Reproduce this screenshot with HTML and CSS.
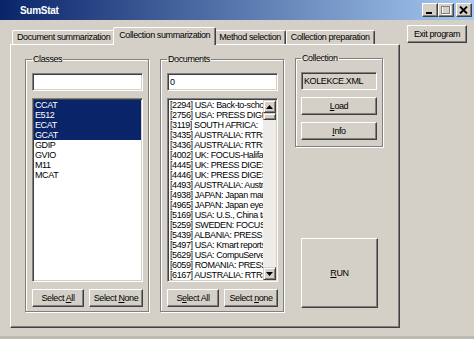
FILE: index.html
```html
<!DOCTYPE html>
<html lang="en">
<head>
    <meta charset="UTF-8">
    <title>SumStat</title>
    <link rel="stylesheet" href="styles.css">
</head>
<body>
    <div class="window">
        <div class="titlebar">
            <span class="title">SumStat</span>
            <div class="caption-btns">
                <span class="cbtn">
                    <svg width="10" height="9" viewBox="0 0 10 9"><rect x="1" y="6" width="6" height="2" fill="#000"/></svg>
                </span>
                <span class="cbtn">
                    <svg width="10" height="9" viewBox="0 0 10 9">
                        <rect x="1.5" y="0.5" width="8" height="8" fill="none" stroke="#fff"/>
                        <rect x="0.5" y="-0.5" width="8" height="8" fill="none" stroke="#808080"/>
                        <rect x="0" y="0" width="9" height="1" fill="#808080"/>
                    </svg>
                </span>
                <span class="cbtn close">
                    <svg width="10" height="9" viewBox="0 0 10 9"><path d="M1 0.5 L8 7.5 M8 0.5 L1 7.5" stroke="#000" stroke-width="1.8"/></svg>
                </span>
            </div>
        </div>

        <div class="client">
            <div class="tabctl">
                <div class="tabs">
                    <div class="tab">Document summarization</div>
                    <div class="tab active">Collection summarization</div>
                    <div class="tab">Method selection</div>
                    <div class="tab">Collection preparation</div>
                </div>

                <div class="panel">
                    <fieldset class="group list-group">
                        <legend>Classes</legend>
                        <div class="group-body">
                            <input type="text" class="field" value="">
                            <div class="listbox">
                                <div class="row sel">CCAT</div>
                                <div class="row sel">E512</div>
                                <div class="row sel">ECAT</div>
                                <div class="row sel">GCAT</div>
                                <div class="row">GDIP</div>
                                <div class="row">GVIO</div>
                                <div class="row">M11</div>
                                <div class="row">MCAT</div>
                            </div>
                            <div class="btn-row">
                                <button class="btn sel-all">Select <u>A</u>ll</button>
                                <button class="btn sel-none">Select <u>N</u>one</button>
                            </div>
                        </div>
                    </fieldset>

                    <fieldset class="group list-group">
                        <legend>Documents</legend>
                        <div class="group-body">
                            <input type="text" class="field" value="0">
                            <div class="listbox docs">
                                <div class="items">
                                    <div class="row">[2294] USA: Back-to-school sales</div>
                                    <div class="row">[2756] USA: PRESS DIGEST</div>
                                    <div class="row">[3119] SOUTH AFRICA: </div>
                                    <div class="row">[3435] AUSTRALIA: RTRS</div>
                                    <div class="row">[3436] AUSTRALIA: RTRS</div>
                                    <div class="row">[4002] UK: FOCUS-Halifax</div>
                                    <div class="row">[4445] UK: PRESS DIGEST</div>
                                    <div class="row">[4446] UK: PRESS DIGEST</div>
                                    <div class="row">[4493] AUSTRALIA: Australia</div>
                                    <div class="row">[4938] JAPAN: Japan market</div>
                                    <div class="row">[4965] JAPAN: Japan eyes</div>
                                    <div class="row">[5169] USA: U.S., China talks</div>
                                    <div class="row">[5259] SWEDEN: FOCUS</div>
                                    <div class="row">[5439] ALBANIA: PRESS</div>
                                    <div class="row">[5497] USA: Kmart reports</div>
                                    <div class="row">[5629] USA: CompuServe</div>
                                    <div class="row">[6059] ROMANIA: PRESS</div>
                                    <div class="row">[6167] AUSTRALIA: RTRS</div>
                                </div>
                                <div class="vscroll">
                                    <span class="arrow">
                                        <svg width="7" height="4" viewBox="0 0 7 4"><path d="M3.5 0 L7 4 L0 4 Z" fill="#000"/></svg>
                                    </span>
                                    <span class="thumb"></span>
                                    <span class="track"></span>
                                    <span class="arrow">
                                        <svg width="7" height="4" viewBox="0 0 7 4"><path d="M0 0 L7 0 L3.5 4 Z" fill="#000"/></svg>
                                    </span>
                                </div>
                            </div>
                            <div class="btn-row">
                                <button class="btn sel-all">S<u>e</u>lect All</button>
                                <button class="btn sel-none">Select <u>n</u>one</button>
                            </div>
                        </div>
                    </fieldset>

                    <div class="side">
                        <fieldset class="group coll">
                            <legend>Collection</legend>
                            <div class="group-body">
                                <input type="text" class="field readonly" value="KOLEKCE.XML" readonly>
                                <button class="btn"><u>L</u>oad</button>
                                <button class="btn"><u>I</u>nfo</button>
                            </div>
                        </fieldset>
                        <button class="btn run"><u>R</u>UN</button>
                    </div>
                </div>
            </div>

            <button class="btn exit">Exit program</button>
        </div>
    </div>
</body>
</html>
```

FILE: styles.css
```css
body {
    margin: 0;
    background-color: #d4d0c8;
    font-family: "Liberation Sans", Arial, sans-serif;
    font-size: 9px;
    letter-spacing: -0.4px;
    color: #000;
}
.window {
    width: 474px;
    height: 339px;
    box-sizing: border-box;
    background-color: #d4d0c8;
    box-shadow: inset 0 -3px 0 #bdb9b1;
}

/* title bar */
.titlebar {
    height: 20px;
    display: flex;
    align-items: center;
    padding: 0 2px 0 20px;
    background: linear-gradient(to right, #0a246a, #a6caf0);
}
.title {
    color: #fff;
    font-weight: bold;
    font-size: 10px;
    letter-spacing: -0.3px;
}
.caption-btns {
    display: flex;
    margin-left: auto;
}
.cbtn {
    width: 16px;
    height: 14px;
    box-sizing: border-box;
    display: flex;
    align-items: center;
    justify-content: center;
    background-color: #d4d0c8;
    border: 1px solid;
    border-color: #fff #404040 #404040 #fff;
    box-shadow: inset -1px -1px 0 #808080;
}
.cbtn.close {
    margin-left: 2px;
}

/* client area */
.client {
    display: flex;
    align-items: flex-start;
    padding: 5px 0 0 10px;
}
.tabctl {
    width: 390px;
    margin-top: 2px;
}
.tabs {
    display: flex;
    align-items: flex-end;
    height: 17px;
    padding-left: 2px;
}
.tab {
    height: 14px;
    box-sizing: border-box;
    line-height: 13px;
    padding: 0 4px;
    border: 1px solid;
    border-bottom: none;
    border-color: #fff #404040 transparent #fff;
    box-shadow: inset -1px 0 0 #808080;
    border-radius: 2px 2px 0 0;
    white-space: nowrap;
}
.tab.active {
    height: 18px;
    line-height: 15px;
    padding: 0 5px;
    margin: 0 -2px -1px;
    position: relative;
    z-index: 1;
    background-color: #d4d0c8;
}
.panel {
    height: 284px;
    box-sizing: border-box;
    display: flex;
    align-items: flex-start;
    gap: 11px;
    padding: 8px 0 0 14px;
    border: 1px solid;
    border-color: #fff #404040 #404040 #fff;
    box-shadow: inset -1px -1px 0 #808080;
}

/* group boxes */
.group {
    margin: 0;
    padding: 8px 5px 4px 6px;
    border: 1px solid #808080;
    box-shadow: inset 1px 1px 0 #fff, 1px 1px 0 #fff;
    min-width: 0;
    box-sizing: border-box;
}
.group legend {
    padding: 0 1px;
    line-height: 12px;
}
.group-body {
    display: flex;
    flex-direction: column;
    gap: 7px;
}
.list-group {
    width: 124px;
}
.coll {
    width: 88px;
    padding: 8px 5px 6px 5px;
    margin-top: -1px;
}

/* inputs */
.field {
    height: 18px;
    box-sizing: border-box;
    margin: 0;
    padding: 0 2px;
    font: inherit;
    letter-spacing: inherit;
    color: #000;
    background-color: #fff;
    border: 1px solid;
    border-color: #808080 #fff #fff #808080;
    box-shadow: inset 1px 1px 0 #404040, inset -1px -1px 0 #d4d0c8;
    outline: none;
}
.field.readonly {
    background-color: #d4d0c8;
}
.listbox {
    height: 184px;
    box-sizing: border-box;
    padding: 1px;
    background-color: #fff;
    border: 1px solid;
    border-color: #808080 #fff #fff #808080;
    box-shadow: inset 1px 1px 0 #404040, inset -1px -1px 0 #d4d0c8;
    overflow: hidden;
}
.row {
    height: 10px;
    line-height: 10px;
    padding-left: 1px;
    white-space: nowrap;
}
.row.sel {
    background-color: #0a246a;
    color: #fff;
}
.listbox.docs {
    display: flex;
}
.items {
    flex: 1;
    min-width: 0;
    overflow: hidden;
}
.vscroll {
    width: 13px;
    display: flex;
    flex-direction: column;
}
.arrow, .thumb {
    box-sizing: border-box;
    display: flex;
    align-items: center;
    justify-content: center;
    background-color: #d4d0c8;
    border: 1px solid;
    border-color: #d4d0c8 #404040 #404040 #d4d0c8;
    box-shadow: inset 1px 1px 0 #fff, inset -1px -1px 0 #808080;
}
.arrow {
    height: 13px;
}
.thumb {
    height: 7px;
}
.track {
    flex: 1;
    background-color: #eeece8;
}

/* buttons */
.btn {
    height: 18px;
    box-sizing: border-box;
    margin: 0;
    padding: 0;
    font: inherit;
    letter-spacing: inherit;
    white-space: nowrap;
    color: #000;
    background-color: #d4d0c8;
    border: 1px solid;
    border-color: #fff #404040 #404040 #fff;
    box-shadow: inset -1px -1px 0 #808080;
}
.btn-row {
    display: flex;
    justify-content: space-between;
}
.sel-all {
    width: 52px;
}
.sel-none {
    width: 54px;
}
.side {
    align-self: stretch;
    display: flex;
    flex-direction: column;
    padding-bottom: 19px;
}
.run {
    width: 77px;
    height: 70px;
    margin: auto 0 0 6px;
}
.exit {
    width: 60px;
    margin-left: 7px;
}
```
